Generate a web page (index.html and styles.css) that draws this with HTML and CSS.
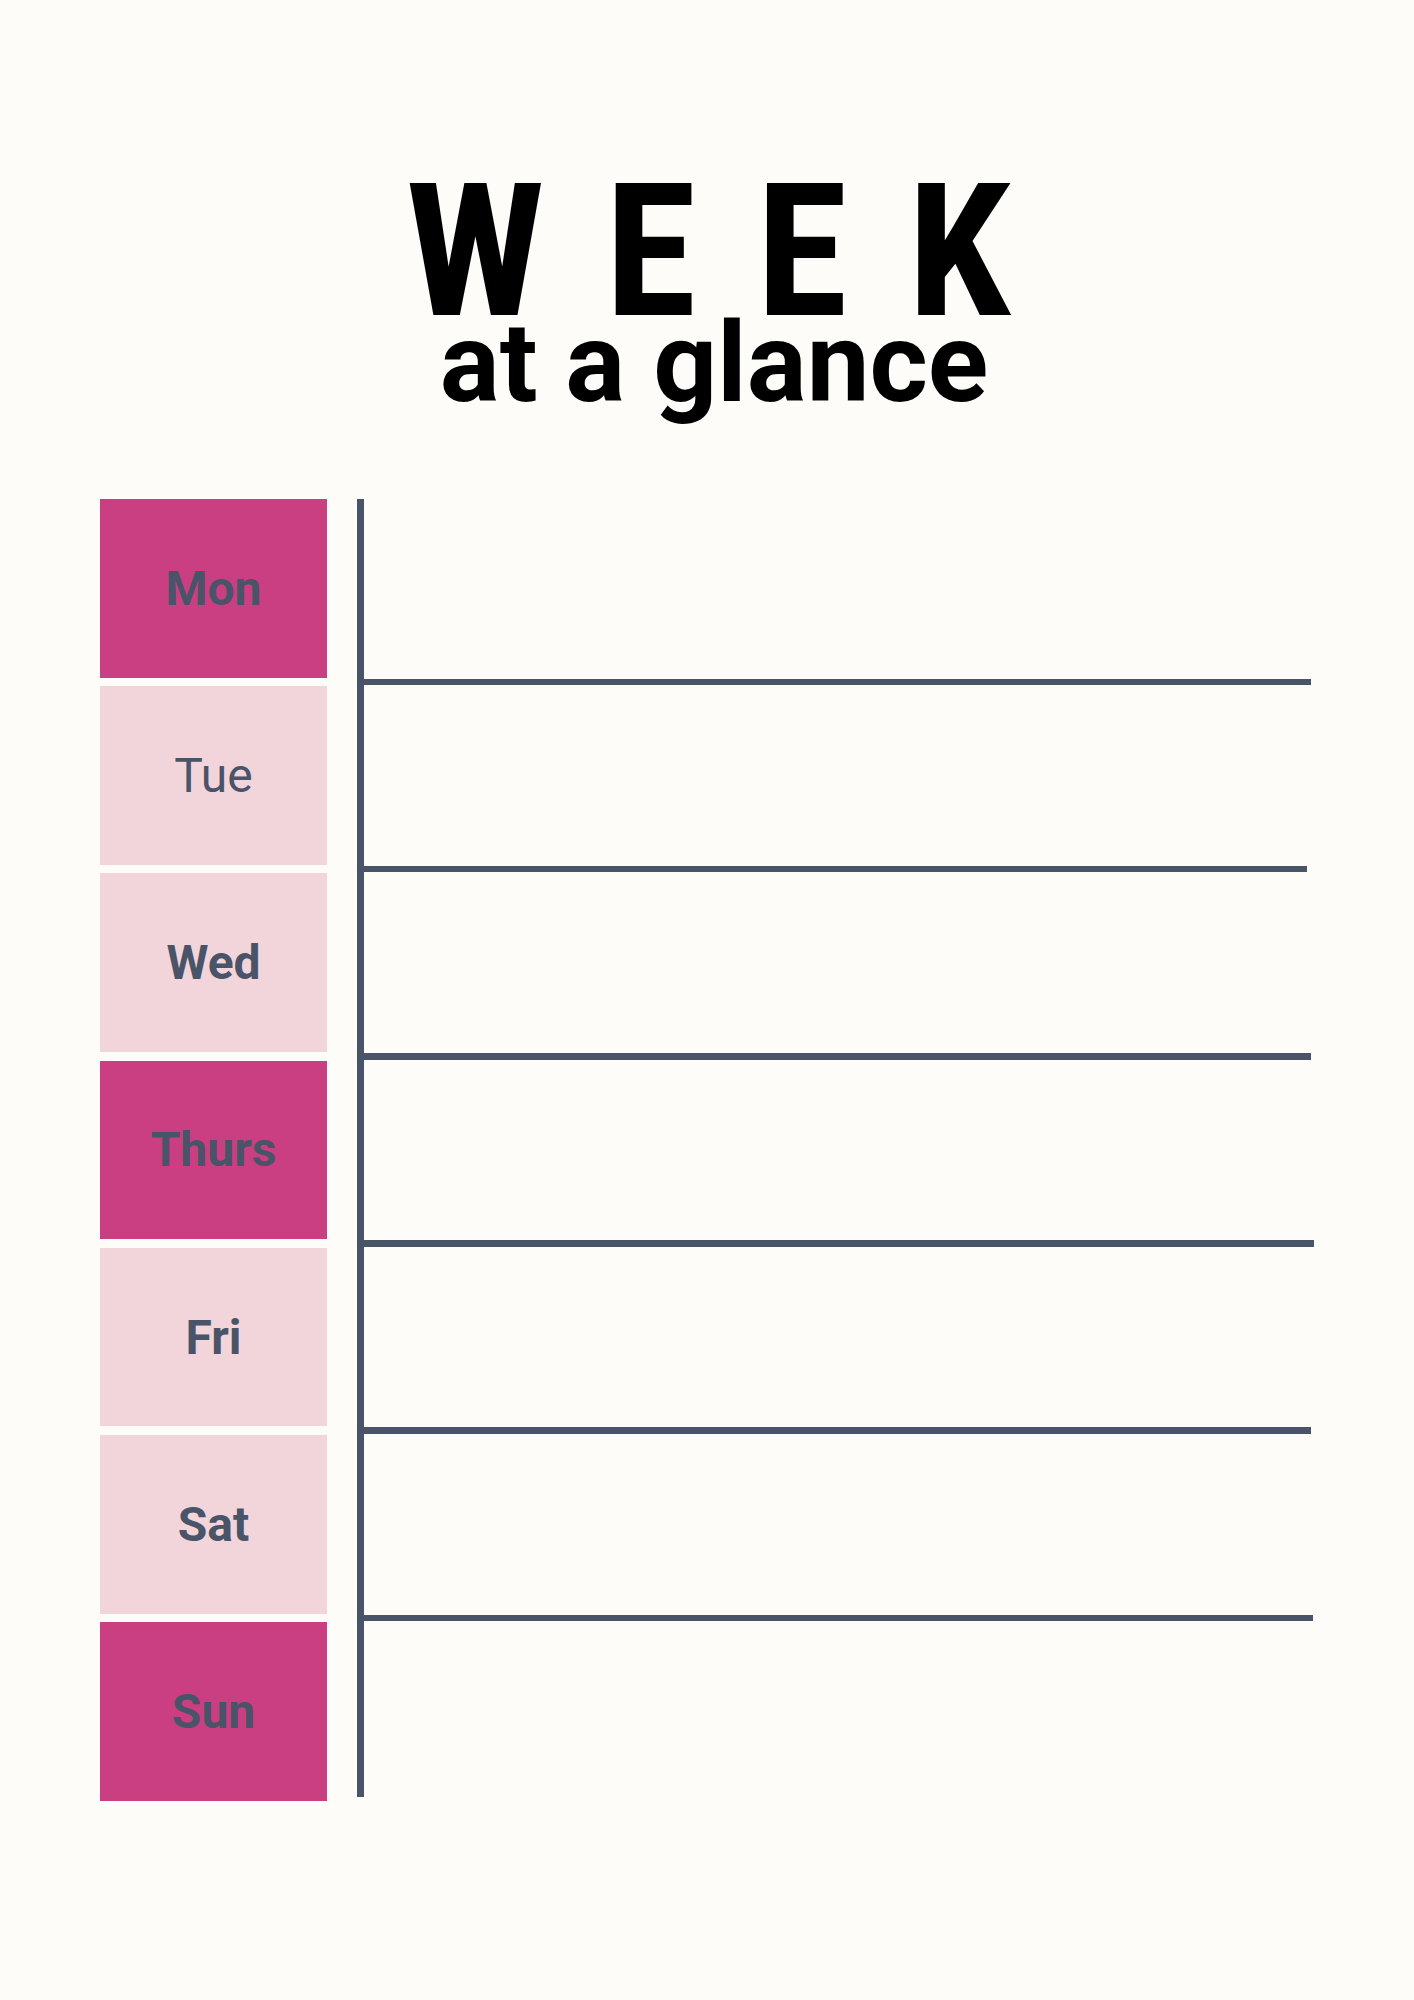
FILE: index.html
```html
<!DOCTYPE html>
<html lang="en">
<head>
<meta charset="utf-8">
<title>Week at a glance</title>
<link rel="stylesheet" href="styles.css">
</head>
<body>
<main class="page">
  <header class="title">
    <h1 class="title-week">WEEK</h1>
    <p class="title-sub">at a glance</p>
  </header>
  <section class="planner">
    <div class="days">
      <div class="day day--strong">Mon</div>
      <div class="day day--soft day--regular">Tue</div>
      <div class="day day--soft">Wed</div>
      <div class="day day--strong">Thurs</div>
      <div class="day day--soft">Fri</div>
      <div class="day day--soft">Sat</div>
      <div class="day day--strong">Sun</div>
    </div>
    <div class="rule"></div>
    <div class="lines">
      <div class="line line--1"></div>
      <div class="line line--2"></div>
      <div class="line line--3"></div>
      <div class="line line--4"></div>
      <div class="line line--5"></div>
      <div class="line line--6"></div>
    </div>
  </section>
</main>
</body>
</html>
```

FILE: styles.css
```css
html, body {
  margin: 0;
  padding: 0;
}

body {
  background: #fdfcf9;
  width: 1414px;
  height: 2000px;
  overflow: hidden;
  font-family: Roboto, "Liberation Sans", sans-serif;
}

.page {
  display: flex;
  flex-direction: column;
}

.title {
  padding-top: 196px;
  display: flex;
  flex-direction: column;
  align-items: center;
  color: #000;
}

.title-week {
  margin: 0;
  font-family: "Roboto Condensed", Roboto, "Liberation Sans", sans-serif;
  font-stretch: condensed;
  font-weight: 700;
  font-size: 186px;
  line-height: 110px;
  letter-spacing: 60px;
  text-indent: 62px;
}

.title-sub {
  margin: 1px 0 0 14px;
  font-family: Roboto, "Liberation Sans", sans-serif;
  font-weight: 700;
  font-size: 112px;
  line-height: 112px;
}

.planner {
  margin-top: 80px;
  padding-left: 100px;
  display: flex;
  align-items: flex-start;
}

.days {
  width: 227px;
  display: flex;
  flex-direction: column;
  gap: 8.73px;
}

.day {
  height: 178.5px;
  display: flex;
  align-items: center;
  justify-content: center;
  font-size: 48px;
  font-weight: 700;
  color: #4a5468;
}

.day--strong {
  background: #c93f82;
}

.day--soft {
  background: #f2d5db;
}

.day--regular {
  font-weight: 400;
}

.rule {
  margin-left: 30px;
  width: 7px;
  height: 1298px;
  background: #4a5468;
}

.lines {
  padding-top: 179.7px;
  display: flex;
  flex-direction: column;
  gap: 180.6px;
}

.line {
  height: 6.6px;
  width: 947px;
  background: #4a5468;
}

.line--2 { width: 943px; }
.line--4 { width: 950px; }
.line--6 { width: 949px; }
```
